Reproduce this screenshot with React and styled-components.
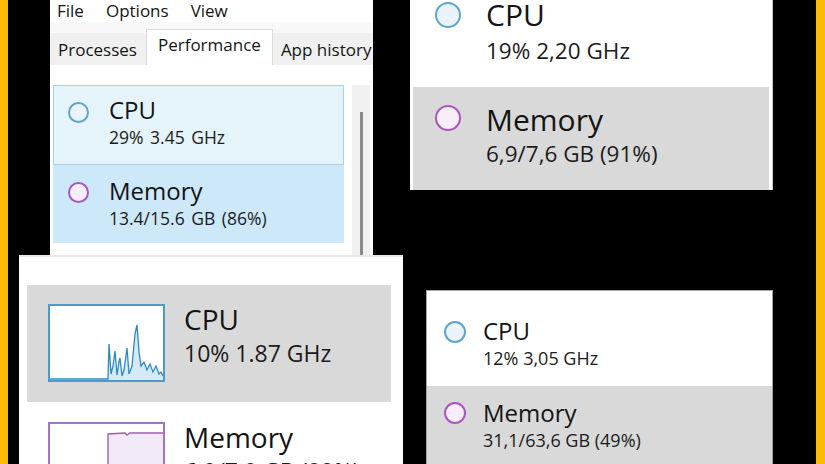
import styled, { createGlobalStyle, css } from "styled-components";

const GlobalStyle = createGlobalStyle`
  html, body {
    margin: 0;
    padding: 0;
    background: #000;
  }
  body {
    font-family: "Open Sans", "Noto Sans", sans-serif;
    color: #151515;
  }
`;

// Collage frame: yellow side edges on a black ground
const Frame = styled.div`
  position: relative;
  box-sizing: border-box;
  width: 825px;
  height: 464px;
  overflow: hidden;
  background: #000;
  border-left: 8px solid #fdbb00;
  border-right: 9px solid #fdbb00;
`;

// Each screenshot is pasted at its own spot on the collage
const Shot = styled.div`
  position: absolute;
  left: ${(p) => p.$x - 8}px;
  top: ${(p) => p.$y}px;
  width: ${(p) => p.$w}px;
  height: ${(p) => p.$h}px;
  box-sizing: border-box;
  overflow: hidden;
  background: #fff;
  ${(p) => p.$edge && css`border: 1px solid ${p.$edge};`}
  ${(p) => p.$rightEdge && css`border-right: 1px solid ${p.$rightEdge};`}
  ${(p) => p.$topEdge && css`border-top: 2px solid ${p.$topEdge};`}
`;

const MenuBar = styled.div`
  display: flex;
  gap: 22px;
  height: 22px;
  padding-left: 7px;
  font-size: 17px;
  line-height: 22px;
  color: #151515;
`;

const TabStrip = styled.div`
  display: flex;
  align-items: flex-end;
  height: 43px;
  background: #f8f8f8;
  white-space: nowrap;
`;

const Tab = styled.div`
  box-sizing: border-box;
  height: ${(p) => (p.$active ? 36 : 32)}px;
  padding: ${(p) => (p.$active ? "0 11px" : "2px 9px 0 8px")};
  font-size: 17px;
  line-height: 30px;
  color: #151515;
  background: ${(p) => (p.$active ? "#fff" : "#f0f0f0")};
  ${(p) =>
    p.$active &&
    css`
      border: 1px solid #dadada;
      border-bottom: none;
    `}
`;

const PerfBody = styled.div`
  display: flex;
  box-sizing: border-box;
  height: 190px;
  padding: 20px 0 0 3px;
`;

const Stack = styled.div`
  display: flex;
  flex-direction: column;
  flex: none;
  box-sizing: border-box;
  width: ${(p) => p.$w}px;
  height: 100%;
  padding: ${(p) => p.$pt || 0}px 0 0 ${(p) => p.$pl || 0}px;
`;

const ScrollTrack = styled.div`
  display: flex;
  flex-direction: column;
  align-items: center;
  width: 18px;
  margin-left: 8px;
  padding-top: 27px;
  background: #f0f0f0;
`;

const ScrollThumb = styled.div`
  flex: 1;
  width: 3px;
  background: #8a8a8a;
`;

const ResourceRow = styled.div`
  display: flex;
  align-items: flex-start;
  flex: none;
  box-sizing: border-box;
  height: ${(p) => (p.$h ? `${p.$h}px` : "auto")};
  padding: ${(p) => p.$pt}px 0 0 ${(p) => p.$pl}px;
  background: ${(p) => p.$bg || "transparent"};
  ${(p) => p.$line && css`border: 1px solid ${p.$line};`}
  ${(p) => p.$grow && css`flex: 1;`}
`;

const Dot = styled.span`
  flex: none;
  box-sizing: border-box;
  width: ${(p) => p.$d}px;
  height: ${(p) => p.$d}px;
  margin: ${(p) => p.$top}px ${(p) => p.$gap}px 0 0;
  border-radius: 50%;
  border: 2px solid ${(p) => p.$tone};
  background: ${(p) => p.$fill};
`;

const Graph = styled.div`
  flex: none;
  box-sizing: border-box;
  width: 117px;
  height: 78px;
  margin-right: 19px;
  border: 2px solid ${(p) => p.$tone};
  background: #fff;

  svg {
    display: block;
    width: 100%;
    height: 100%;
  }
`;

const Labels = styled.div`
  white-space: nowrap;
`;

const Name = styled.div`
  font-size: ${(p) => p.$f}px;
  line-height: ${(p) => p.$lh}px;
  color: #141414;
`;

const Reading = styled.div`
  margin-top: ${(p) => p.$mt}px;
  font-size: ${(p) => p.$f}px;
  line-height: ${(p) => p.$lh}px;
  word-spacing: ${(p) => p.$ws || 0}px;
  color: #1c1c1c;
`;

const CPU_TONE = { tone: "#5fa4cc", fill: "#eaf3f9" };
const MEM_TONE = { tone: "#a857bd", fill: "#f8eefa" };

const CpuChart = () => (
  <svg viewBox="0 0 113 74" preserveAspectRatio="none">
    <polygon
      fill="#d6eaf6"
      points="58,74 59,38 61,68 63,60 65,45 67,69 69,56 70,52 72,70 74,64 77,42 79,68 82,60 85,28 87,19 89,46 91,60 94,56 97,64 100,58 103,66 106,60 109,68 111,66 113,70 113,74"
    />
    <polyline
      fill="none"
      stroke="#2b8ac4"
      strokeWidth="1.3"
      points="0,73 58,73 59,38 61,68 63,60 65,45 67,69 69,56 70,52 72,70 74,64 77,42 79,68 82,60 85,28 87,19 89,46 91,60 94,56 97,64 100,58 103,66 106,60 109,68 111,66 113,70"
    />
  </svg>
);

const MemChart = () => (
  <svg viewBox="0 0 113 74" preserveAspectRatio="none">
    <polygon
      fill="#f2eaf6"
      stroke="#9b62b6"
      strokeWidth="1.4"
      points="58,76 58,10 75,9 77,11 80,9 114,9 114,76"
    />
  </svg>
);

const DotRow = ({ row, m, tone, name, reading }) => (
  <ResourceRow {...row}>
    <Dot $d={m.dot} $top={row.dotTop} $gap={m.gap} $tone={tone.tone} $fill={tone.fill} />
    <Labels>
      <Name $f={m.name} $lh={m.nameLh}>{name}</Name>
      <Reading $f={m.read} $lh={m.readLh} $mt={row.readMt} $ws={m.ws}>
        {reading}
      </Reading>
    </Labels>
  </ResourceRow>
);

const m1 = { dot: 21, gap: 20, name: 24, nameLh: 28, read: 17.5, readLh: 22, ws: 2 };
const m2 = { dot: 26, gap: 25, name: 30, nameLh: 30, read: 22.5, readLh: 24 };
const m3 = { name: 28, nameLh: 30, read: 23, readLh: 24 };
const m4 = { dot: 22, gap: 17, name: 24, nameLh: 28, read: 18, readLh: 22 };

export default function App() {
  return (
    <>
      <GlobalStyle />
      <Frame>
        {/* Task Manager window with menu and tabs */}
        <Shot $x={50} $y={0} $w={323} $h={255}>
          <MenuBar>
            <span>File</span>
            <span>Options</span>
            <span>View</span>
          </MenuBar>
          <TabStrip>
            <Tab>Processes</Tab>
            <Tab $active>Performance</Tab>
            <Tab>App history</Tab>
          </TabStrip>
          <PerfBody>
            <Stack $w={291}>
              <DotRow
                row={{ $h: 80, $pt: 10, $pl: 14, $bg: "#e5f3fb", $line: "#a6d2ea", dotTop: 6, readMt: 2 }}
                m={m1}
                tone={CPU_TONE}
                name="CPU"
                reading="29% 3.45 GHz"
              />
              <DotRow
                row={{ $h: 78, $pt: 12, $pl: 15, $bg: "#cce8f9", dotTop: 5, readMt: 2 }}
                m={m1}
                tone={MEM_TONE}
                name="Memory"
                reading="13.4/15.6 GB (86%)"
              />
            </Stack>
            <ScrollTrack>
              <ScrollThumb />
            </ScrollTrack>
          </PerfBody>
        </Shot>

        {/* Top right crop */}
        <Shot $x={410} $y={0} $w={363} $h={190} $rightEdge="#c9c9c9">
          <Stack $w={359} $pl={3}>
            <DotRow
              row={{ $h: 87, $pt: 0, $pl: 22, dotTop: 2, readMt: 9 }}
              m={m2}
              tone={CPU_TONE}
              name="CPU"
              reading="19% 2,20 GHz"
            />
            <DotRow
              row={{ $grow: true, $pt: 18, $pl: 22, $bg: "#d9d9d9", dotTop: 0, readMt: 7 }}
              m={m2}
              tone={MEM_TONE}
              name="Memory"
              reading="6,9/7,6 GB (91%)"
            />
          </Stack>
        </Shot>

        {/* Bottom left crop with graphs */}
        <Shot $x={19} $y={255} $w={384} $h={209} $topEdge="#e8e8e8">
          <Stack $w={372} $pl={8} $pt={28}>
            <ResourceRow $h={117} $pt={19} $pl={21} $bg="#d9d9d9">
              <Graph $tone="#4e9bc7">
                <CpuChart />
              </Graph>
              <Labels>
                <Name $f={m3.name} $lh={m3.nameLh}>CPU</Name>
                <Reading $f={m3.read} $lh={m3.readLh} $mt={7}>
                  10% 1.87 GHz
                </Reading>
              </Labels>
            </ResourceRow>
            <ResourceRow $grow $pt={20} $pl={21}>
              <Graph $tone="#a474c0">
                <MemChart />
              </Graph>
              <Labels>
                <Name $f={m3.name} $lh={m3.nameLh}>Memory</Name>
                <Reading $f={m3.read} $lh={m3.readLh} $mt={7}>
                  6.9/7.9 GB (88%)
                </Reading>
              </Labels>
            </ResourceRow>
          </Stack>
        </Shot>

        {/* Bottom right crop */}
        <Shot $x={426} $y={290} $w={347} $h={180} $edge="#a3a3a3">
          <Stack $w={345}>
            <DotRow
              row={{ $h: 95, $pt: 26, $pl: 17, dotTop: 4, readMt: 2 }}
              m={m4}
              tone={CPU_TONE}
              name="CPU"
              reading="12% 3,05 GHz"
            />
            <DotRow
              row={{ $grow: true, $pt: 13, $pl: 17, $bg: "#d9d9d9", dotTop: 3, readMt: 2 }}
              m={m4}
              tone={MEM_TONE}
              name="Memory"
              reading="31,1/63,6 GB (49%)"
            />
          </Stack>
        </Shot>
      </Frame>
    </>
  );
}
